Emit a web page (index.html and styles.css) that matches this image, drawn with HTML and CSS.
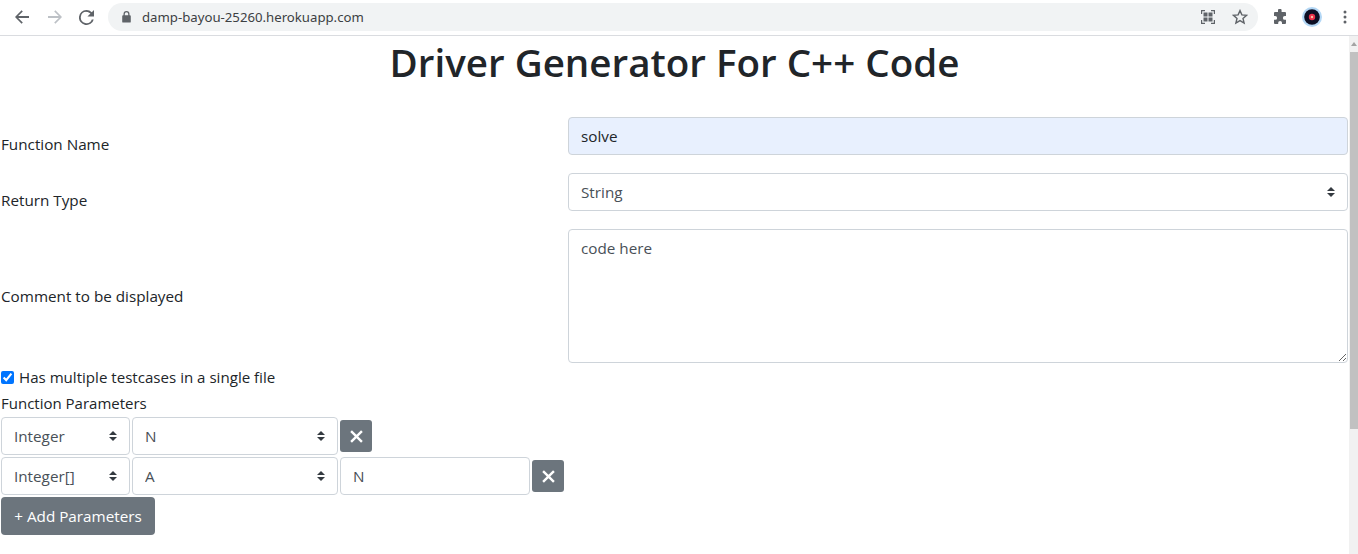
FILE: index.html
```html
<!DOCTYPE html>
<html lang="en">
<head>
<meta charset="utf-8">
<title>Driver Generator For C++ Code</title>
<link rel="stylesheet" href="styles.css">
</head>
<body>
<header class="chrome">
  <svg class="nav-icon back" viewBox="0 0 16 16"><path d="M15 7H4.200l4.600-4.600L7.600 1.200 1 8l6.600 6.800 1.200-1.200L4.200 9H15z"/></svg>
  <svg class="nav-icon forward" viewBox="0 0 16 16"><path d="M1 7h10.800L7.200 2.400l1.200-1.200L15 8l-6.600 6.800-1.200-1.200L11.800 9H1z"/></svg>
  <svg class="nav-icon reload" viewBox="0 0 16 16"><path d="M13.600 2.400A7.900 7.900 0 0 0 8 0a8 8 0 1 0 7.700 10h-2.100A6 6 0 1 1 8 2c1.700 0 3.100.7 4.200 1.800L9 7h7V0z"/></svg>
  <div class="omnibox">
    <svg class="lock" viewBox="0 0 12 14"><path d="M10 5H9.500V3.500a3.500 3.500 0 0 0-7 0V5H2a1 1 0 0 0-1 1v6.500a1 1 0 0 0 1 1h8a1 1 0 0 0 1-1V6a1 1 0 0 0-1-1zM4 5V3.500a2 2 0 0 1 4 0V5z"/></svg>
    <span class="url">damp-bayou-25260.herokuapp.com</span>
    <svg class="omni-icon qr" viewBox="0 0 16 16"><path d="M1 1h4v1.200H2.200V5H1zM11 1h4v4h-1.200V2.200H11zM1 11h1.200v2.800H5V15H1zM13.800 11H15v4h-4v-1.200h2.800z"/><rect x="3.500" y="3.500" width="4" height="4"/><rect x="8.500" y="3.500" width="4" height="4"/><rect x="3.500" y="8.500" width="4" height="4"/><rect x="8.500" y="8.500" width="4" height="4"/></svg>
    <svg class="omni-icon star" viewBox="0 0 16 16"><path d="M8 1.600l1.900 4.300 4.700.4-3.600 3.100 1.100 4.600L8 11.600l-4.100 2.400L5 9.400 1.400 6.300l4.700-.4z"/></svg>
  </div>
  <svg class="puzzle" viewBox="0 0 16 16"><path d="M6 1.500a1.800 1.800 0 0 1 3.600 0V3h3.400a1 1 0 0 1 1 1v3h-1.200a1.900 1.900 0 0 0 0 3.800H14V14a1 1 0 0 1-1 1h-3v-1.200a1.900 1.900 0 0 0-3.800 0V15H3a1 1 0 0 1-1-1v-3.200h1.200a1.900 1.900 0 0 0 0-3.800H2V4a1 1 0 0 1 1-1h3z"/></svg>
  <svg class="avatar" viewBox="0 0 20 20"><circle cx="10" cy="10" r="10" fill="#b3d7f5"/><circle cx="10" cy="10" r="7.800" fill="#0c0f24"/><circle cx="10" cy="10" r="3.200" fill="#e8304a"/><circle cx="10" cy="10" r="1.200" fill="#f7c0a0"/></svg>
  <svg class="menu" viewBox="0 0 4 16"><circle cx="2" cy="3" r="1.500"/><circle cx="2" cy="8" r="1.500"/><circle cx="2" cy="13" r="1.500"/></svg>
</header>
<div class="viewport">
  <main class="page">
    <h1 class="title">Driver Generator For C++ Code</h1>
    <form class="form">
      <div class="field">
        <label class="label" for="fn">Function Name</label>
        <input class="control filled" id="fn" type="text" value="solve">
      </div>
      <div class="field">
        <label class="label" for="rt">Return Type</label>
        <select class="control select" id="rt"><option>String</option></select>
      </div>
      <div class="field">
        <label class="label" for="cm">Comment to be displayed</label>
        <textarea class="control area" id="cm">code here</textarea>
      </div>
      <label class="check"><input class="checkbox" type="checkbox" checked>Has multiple testcases in a single file</label>
      <div class="params-title">Function Parameters</div>
      <div class="param">
        <select class="control select type"><option>Integer</option></select>
        <select class="control select name"><option>N</option></select>
        <button class="remove" type="button" aria-label="Remove"><svg viewBox="0 0 12 12"><path d="M1 1l10 10M11 1L1 11"/></svg></button>
      </div>
      <div class="param">
        <select class="control select type"><option>Integer[]</option></select>
        <select class="control select name"><option>A</option></select>
        <input class="control size" type="text" value="N">
        <button class="remove" type="button" aria-label="Remove"><svg viewBox="0 0 12 12"><path d="M1 1l10 10M11 1L1 11"/></svg></button>
      </div>
      <button class="add" type="button">+ Add Parameters</button>
    </form>
  </main>
  <div class="scrollbar">
    <div class="arrow"></div>
    <div class="thumb"></div>
  </div>
</div>
</body>
</html>
```
FILE: styles.css
```css
* { box-sizing: border-box; }
html, body { height: 100%; }
body {
  margin: 0;
  display: flex;
  flex-direction: column;
  overflow: hidden;
  background: #fff;
  color: #212529;
  font-family: "Open Sans", "Noto Sans", sans-serif;
  font-size: 15.25px;
}
.chrome {
  height: 36px;
  flex: none;
  display: flex;
  align-items: center;
  padding: 0 0 1px 14px;
  border-bottom: 1px solid #dadce0;
  background: #fff;
}
.nav-icon { width: 16px; height: 16px; flex: none; margin-right: 16px; fill: #5f6368; }
.nav-icon.back { margin-right: 17px; }
.nav-icon.reload { margin-right: 14px; width: 15px; height: 15px; }
.nav-icon.forward { fill: #bdc1c6; }
.omnibox {
  width: 1150px;
  height: 28px;
  flex: none;
  display: flex;
  align-items: center;
  padding: 0 10px 0 13px;
  border-radius: 14px;
  background: #f1f3f4;
}
.lock { width: 11px; height: 12px; fill: #5f6368; margin-right: 10px; }
.url { font-family: "Noto Sans", sans-serif; font-size: 13.2px; color: #3c4043; flex: 1; }
.omni-icon { width: 16px; height: 16px; }
.qr { fill: #5f6368; margin-right: 16px; }
.star { fill: none; stroke: #5f6368; stroke-width: 1.400; }
.puzzle { width: 16px; height: 16px; fill: #5f6368; margin-left: 14px; flex: none; }
.avatar { width: 20px; height: 20px; margin-left: 14px; flex: none; }
.menu { width: 4px; height: 16px; fill: #5f6368; margin-left: 21px; flex: none; }

.viewport { flex: 1; display: flex; min-height: 0; }
.page { flex: 1; padding: 0 1px; min-width: 0; }
.title {
  margin: 0 0 26px;
  height: 55px;
  text-align: center;
  font-size: 38.55px;
  font-weight: 600;
  line-height: 52px;
}
.form { display: flex; flex-direction: column; }
.field { display: grid; grid-template-columns: 567px 780px; align-items: center; margin-bottom: 18px; }
.label { display: block; padding-top: 15px; }
.control {
  display: block;
  height: 38px;
  padding: 6px 12px;
  border: 1px solid #ced4da;
  border-radius: 4px;
  background-color: #fff;
  color: #495057;
  font: inherit;
  line-height: 24px;
  outline: none;
}
.filled { background: #e8f0fe; color: #212529; }
.select {
  appearance: none;
  -webkit-appearance: none;
  padding-right: 24px;
  background-image: url("data:image/svg+xml,%3Csvg xmlns='http://www.w3.org/2000/svg' width='8' height='10' viewBox='0 0 8 10'%3E%3Cpath fill='%23343a40' d='M4 0 0 4h8zM4 10 0 6h8z'/%3E%3C/svg%3E");
  background-repeat: no-repeat;
  background-position: right 12px center;
}
.area { height: 134px; resize: vertical; }
.field:nth-child(3) { margin-bottom: 4px; }
.field:nth-child(3) .label { padding-top: 0; }
.check { display: flex; align-items: center; height: 20px; font-size: 15.1px; }
.checkbox { width: 13px; height: 13px; margin: 0 5px 0 0; accent-color: #0075ff; }
.params-title { margin-top: 6px; height: 20px; line-height: 20px; margin-bottom: 4px; font-size: 15px; }
.param { display: flex; align-items: center; gap: 2px; margin-bottom: 2px; }
.type { width: 129px; }
.name { width: 206px; }
.size { width: 190px; }
.remove {
  width: 32px;
  height: 32px;
  padding: 0;
  display: flex;
  align-items: center;
  justify-content: center;
  border: 0;
  border-radius: 3px;
  background: #6c757d;
}
.remove svg { width: 13px; height: 13px; fill: none; stroke: #fff; stroke-width: 2.200; }
.add {
  width: 154px;
  height: 38px;
  padding: 0;
  border: 0;
  border-radius: 4px;
  background: #6c757d;
  color: #fff;
  font: inherit;
}
.scrollbar { width: 9px; flex: none; background: #f1f1f1; display: flex; flex-direction: column; align-items: stretch; padding: 0 0 0 1px; }
.arrow { height: 16px; position: relative; }
.arrow::before {
  content: "";
  position: absolute;
  left: 1px;
  top: 6px;
  border-left: 3.500px solid transparent;
  border-right: 3.500px solid transparent;
  border-bottom: 4px solid #a3a3a3;
}
.thumb { height: 377px; background: #c1c1c1; }
```
